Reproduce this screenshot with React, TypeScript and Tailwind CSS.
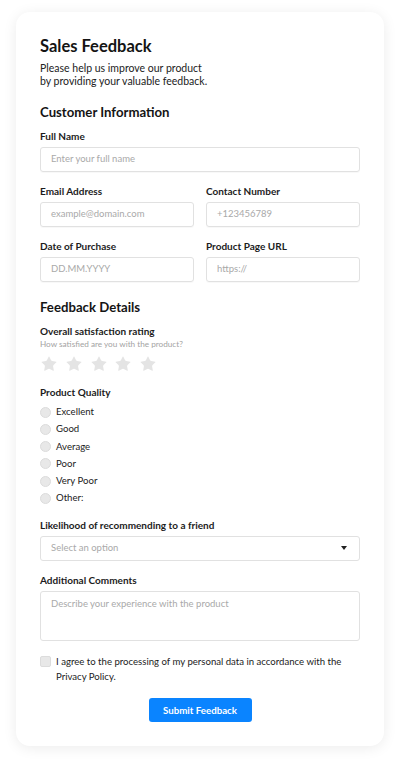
import { Star } from "lucide-react";

const qualityOptions = ["Excellent", "Good", "Average", "Poor", "Very Poor", "Other:"];

function Label({ children }: { children: React.ReactNode }) {
  return <div className="text-[10px] font-bold leading-[14px] text-[#1c1c1c]">{children}</div>;
}

function Field({ label, placeholder }: { label: string; placeholder: string }) {
  return (
    <div className="flex flex-col gap-[4px]">
      <Label>{label}</Label>
      <div className="flex h-[25px] items-center rounded-[3px] border border-[#e1e1e1] px-[10px] text-[9.5px] text-[#a9a9a9] shadow-[0_1px_1px_rgba(0,0,0,0.03)]">
        {placeholder}
      </div>
    </div>
  );
}

export default function App() {
  return (
    <div
      className="min-h-[759px] bg-white px-4 pt-3 pb-3"
      style={{ fontFamily: 'Lato, "Noto Sans", sans-serif' }}
    >
      <div className="rounded-[14px] bg-white px-6 pt-[22px] pb-[24px] shadow-[0_2px_14px_rgba(0,0,0,0.08)]">
        {/* Header */}
        <h1 className="text-[16.5px] font-bold leading-[24px] text-[#141414]">Sales Feedback</h1>
        <p className="mt-[4px] text-[10.5px] leading-[13.4px] text-[#222]">
          Please help us improve our product
          <br />
          by providing your valuable feedback.
        </p>

        {/* Customer info */}
        <h2 className="mt-[14px] text-[13.2px] font-bold leading-[18px] text-[#141414]">Customer Information</h2>
        <div className="mt-[8px] flex flex-col gap-[12px]">
          <Field label="Full Name" placeholder="Enter your full name" />
          <div className="grid grid-cols-2 gap-3">
            <Field label="Email Address" placeholder="example@domain.com" />
            <Field label="Contact Number" placeholder="+123456789" />
          </div>
          <div className="grid grid-cols-2 gap-3">
            <Field label="Date of Purchase" placeholder="DD.MM.YYYY" />
            <Field label="Product Page URL" placeholder="https://" />
          </div>
        </div>

        {/* Feedback details */}
        <h2 className="mt-[16px] text-[13.2px] font-bold leading-[18px] text-[#141414]">Feedback Details</h2>
        <div className="mt-[8px]">
          <Label>Overall satisfaction rating</Label>
          <div className="text-[8.2px] leading-[12px] text-[#a3a3a3]">How satisfied are you with the product?</div>
          <div className="mt-[5px] flex gap-[6.8px]">
            {[0, 1, 2, 3, 4].map((i) => (
              <Star key={i} size={18} strokeWidth={0} fill="#e4e4e4" />
            ))}
          </div>
        </div>

        <div className="mt-[12px]">
          <Label>Product Quality</Label>
          <div className="mt-[5px] flex flex-col">
            {qualityOptions.map((opt) => (
              <div key={opt} className="flex h-[17.2px] items-center gap-[5px]">
                <span className="h-[11px] w-[11px] rounded-full border border-[#dcdcdc] bg-[#e8e8e8]" />
                <span className="text-[9.6px] text-[#222]">{opt}</span>
              </div>
            ))}
          </div>
        </div>

        <div className="mt-[11px] flex flex-col gap-[4px]">
          <Label>Likelihood of recommending to a friend</Label>
          <div className="flex h-[25px] items-center justify-between rounded-[3px] border border-[#e1e1e1] px-[10px] text-[9.5px] text-[#a9a9a9]">
            Select an option
            <span className="mr-[2px] h-0 w-0 border-x-[3.5px] border-t-[4px] border-x-transparent border-t-[#222]" />
          </div>
        </div>

        <div className="mt-[12px] flex flex-col gap-[4px]">
          <Label>Additional Comments</Label>
          <div className="h-[50px] rounded-[3px] border border-[#e1e1e1] px-[10px] pt-[5px] text-[9.5px] text-[#a9a9a9]">
            Describe your experience with the product
          </div>
        </div>

        {/* Consent */}
        <div className="mt-[13px] flex items-start gap-[5px]">
          <span className="mt-[2px] h-[11px] w-[11px] shrink-0 rounded-[2px] border border-[#dcdcdc] bg-[#e8e8e8]" />
          <span className="text-[9.6px] leading-[15px] text-[#222]">
            I agree to the processing of my personal data in accordance with the Privacy Policy.
          </span>
        </div>

        <div className="mt-[14px] flex justify-center">
          <button className="h-[24px] w-[103px] rounded-[3px] bg-[#0a84ff] text-[9.7px] font-bold text-white">
            Submit Feedback
          </button>
        </div>
      </div>
    </div>
  );
}
